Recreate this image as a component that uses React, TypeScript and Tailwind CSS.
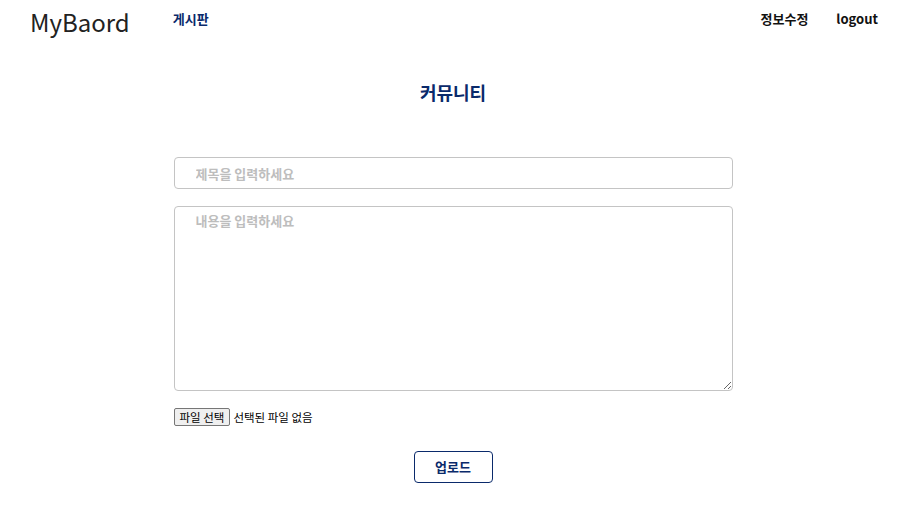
import { useState } from "react";

const navy = "text-[#0a2a6b]";

const App = () => {
  const [fileName, setFileName] = useState("");

  return (
    <div className="min-h-[506px] w-full bg-white font-['Noto_Sans_CJK_KR','Noto_Sans',sans-serif] text-[#111]">
      {/* header */}
      <header className="flex items-start justify-between pl-[30px] pr-[42px] pt-[4px]">
        <div className="flex items-start">
          <a href="#" className="text-[24px] leading-[36px] text-[#222]">
            MyBaord
          </a>
          <a href="#" className={`ml-[43px] mt-[5px] text-[13px] font-bold leading-[20px] ${navy}`}>
            게시판
          </a>
        </div>
        <div className="mt-[5px] flex gap-[28px] text-[13px] font-bold leading-[20px]">
          <a href="#">정보수정</a>
          <a href="#">logout</a>
        </div>
      </header>

      {/* content */}
      <main className="flex flex-col items-center pr-[14px]">
        <h2 className={`mt-[38px] text-[18px] font-bold leading-[28px] ${navy}`}>커뮤니티</h2>

        <form className="mt-[51px] flex w-[559px] flex-col" onSubmit={(e) => e.preventDefault()}>
          <input
            type="text"
            placeholder="제목을 입력하세요"
            className="h-[32px] w-full rounded-[4px] border border-[#c4c4c4] px-[21px] text-[13px] font-bold outline-none placeholder:text-[#bdbdbd]"
          />
          <textarea
            placeholder="내용을 입력하세요"
            className="mt-[17px] h-[185px] w-full rounded-[4px] border border-[#c4c4c4] px-[21px] py-[4px] text-[13px] font-bold outline-none placeholder:text-[#bdbdbd]"
          />
          <label className="mt-[17px] flex cursor-pointer items-center text-[11.5px] leading-[18px]">
            <input
              type="file"
              className="hidden"
              onChange={(e) => setFileName(e.target.files?.[0]?.name ?? "")}
            />
            <span className="rounded-[2px] border border-[#767676] bg-[#efefef] px-[5px] leading-[16px] text-black">
              파일 선택
            </span>
            <span className="ml-[3px] text-black">{fileName || "선택된 파일 없음"}</span>
          </label>

          <div className="mt-[25px] flex justify-center">
            <button
              type="submit"
              className={`h-[32px] w-[79px] rounded-[4px] border border-[#0a2a6b] bg-white text-[13px] font-bold ${navy}`}
            >
              업로드
            </button>
          </div>
        </form>
      </main>
    </div>
  );
};

export default App;
